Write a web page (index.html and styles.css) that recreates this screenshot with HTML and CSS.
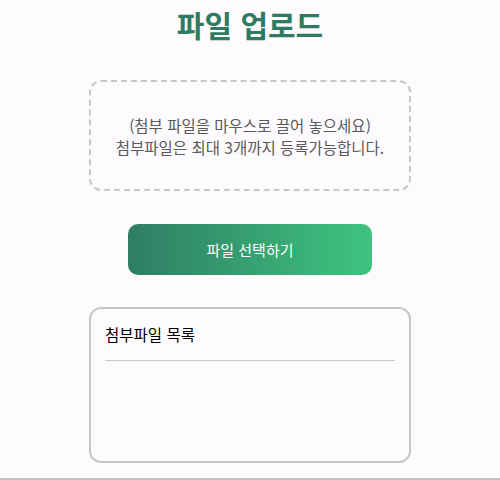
FILE: index.html
```html
<!DOCTYPE html>
<html lang="ko">
<head>
    <meta charset="UTF-8">
    <meta name="viewport" content="width=device-width, initial-scale=1.0">
    <title>파일 업로드</title>
    <link rel="stylesheet" href="styles.css">
</head>
<body>
    <div class="upload-page">
        <h1 class="title">파일 업로드</h1>

        <div class="drop-zone">
            <p>(첨부 파일을 마우스로 끌어 놓으세요)</p>
            <p>첨부파일은 최대 3개까지 등록가능합니다.</p>
        </div>

        <button class="select-btn" type="button">파일 선택하기</button>

        <div class="file-list">
            <h2 class="file-list-title">첨부파일 목록</h2>
            <hr class="file-list-line">
        </div>
    </div>
    <div class="bottom-line"></div>
</body>
</html>
```

FILE: styles.css
```css
body {
    margin: 0;
    background-color: #fdfbfd;
    font-family: "Noto Sans CJK KR", "Noto Sans", sans-serif;
    color: #111;
}
.upload-page {
    display: flex;
    flex-direction: column;
    align-items: center;
}
.title {
    margin: 6px 0 0;
    font-size: 30px;
    line-height: 36px;
    font-weight: 700;
    color: #2f7b62;
}
.drop-zone {
    box-sizing: border-box;
    width: 322px;
    height: 111px;
    margin-top: 38px;
    border: 2px dashed #c8c6c8;
    border-radius: 12px;
    display: flex;
    flex-direction: column;
    justify-content: center;
    align-items: center;
    color: #5a5a5a;
    font-size: 15.5px;
    line-height: 22px;
}
.drop-zone p {
    margin: 0;
}
.select-btn {
    width: 244px;
    height: 51px;
    margin-top: 33px;
    border: none;
    border-radius: 10px;
    background: linear-gradient(90deg, #2f7d64, #3ec47f);
    color: #fff;
    font-family: inherit;
    font-size: 15px;
}
.file-list {
    box-sizing: border-box;
    width: 322px;
    height: 156px;
    margin-top: 32px;
    padding: 12px 14px 0;
    border: 2px solid #c8c6c8;
    border-radius: 12px;
}
.file-list-title {
    margin: 0;
    font-size: 15.5px;
    line-height: 26px;
    font-weight: 400;
    color: #000;
}
.file-list-line {
    margin: 13px 0 0;
    border: none;
    border-top: 1px solid #c8c6c8;
}
.bottom-line {
    margin-top: 15px;
    border-top: 2px solid #c4c4c4;
}
```
